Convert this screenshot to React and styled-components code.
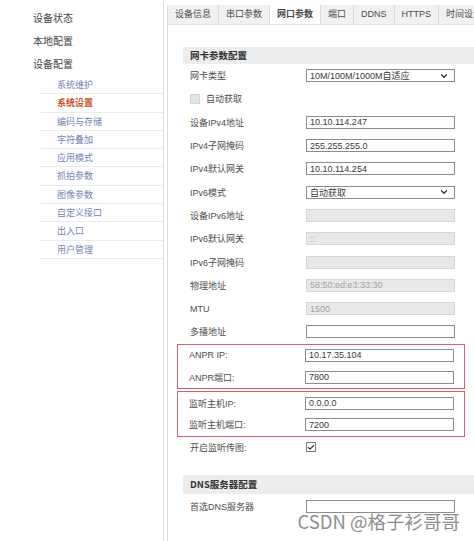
import React from 'react';
import styled, { createGlobalStyle } from 'styled-components';
import { ChevronDown, Check } from 'lucide-react';

const GlobalStyle = createGlobalStyle`
  html, body {
    margin: 0;
    padding: 0;
    background: #fff;
  }
  body {
    font-family: "Liberation Sans", "Noto Sans CJK SC", sans-serif;
    overflow: hidden;
  }
`;

const topItems = ['设备状态', '本地配置', '设备配置'];
const subItems = ['系统维护', '系统设置', '编码与存储', '字符叠加', '应用模式', '抓拍参数', '图像参数', '自定义接口', '出入口', '用户管理'];
const tabs = ['设备信息', '串口参数', '网口参数', '端口', 'DDNS', 'HTTPS', '时间设置'];

const rows = [
  { label: '网卡类型', value: '10M/100M/1000M自适应', kind: 'select' },
  { label: '自动获取', kind: 'check' },
  { label: '设备IPv4地址', value: '10.10.114.247' },
  { label: 'IPv4子网掩码', value: '255.255.255.0' },
  { label: 'IPv4默认网关', value: '10.10.114.254' },
  { label: 'IPv6模式', value: '自动获取', kind: 'select' },
  { label: '设备IPv6地址', value: '', disabled: true },
  { label: 'IPv6默认网关', value: '::', disabled: true },
  { label: 'IPv6子网掩码', value: '', disabled: true },
  { label: '物理地址', value: '58:50:ed:e3:33:30', disabled: true },
  { label: 'MTU', value: '1500', disabled: true },
  { label: '多播地址', value: '' },
];

const groups = [
  [
    { label: 'ANPR IP:', value: '10.17.35.104' },
    { label: 'ANPR端口:', value: '7800' },
  ],
  [
    { label: '监听主机IP:', value: '0.0.0.0' },
    { label: '监听主机端口:', value: '7200' },
  ],
];

const App = () => {
  return (
    <Page>
      <GlobalStyle />
      <Sidebar>
        {topItems.map((t) => (
          <TopItem key={t}>{t}</TopItem>
        ))}
        <SubMenu>
          {subItems.map((s) => (
            <SubItem key={s} $active={s === '系统设置'}>{s}</SubItem>
          ))}
        </SubMenu>
      </Sidebar>

      <Main>
        <Panel>
          <TabBar>
            {tabs.map((t) => (
              <Tab key={t} $active={t === '网口参数'}>{t}</Tab>
            ))}
          </TabBar>

          <Content>
            <SectionHeader>网卡参数配置</SectionHeader>
            {rows.map((r) => (
              <FormRow key={r.label} row={r} />
            ))}
            {groups.map((g, i) => (
              <Highlight key={i} $first={i === 0}>
                {g.map((r) => (
                  <FormRow key={r.label} row={r} h={21.8} />
                ))}
              </Highlight>
            ))}
            <Row $h={21}>
              <Label>开启监听传图:</Label>
              <Box $checked>
                <Check size={9} strokeWidth={3.5} color="#333" />
              </Box>
            </Row>

            <SectionHeader $gap={17} $h={19}>DNS服务器配置</SectionHeader>
            <Row $h={26}>
              <Label>首选DNS服务器</Label>
              <Field />
            </Row>
          </Content>
        </Panel>
      </Main>

      <Watermark>CSDN @格子衫哥哥</Watermark>
    </Page>
  );
};

const FormRow = ({ row, h = 23.3 }) => {
  if (row.kind === 'check') {
    return (
      <Row $h={h}>
        <Box $disabled />
        <CheckText>{row.label}</CheckText>
      </Row>
    );
  }
  return (
    <Row $h={h}>
      <Label>{row.label}</Label>
      <Field $disabled={row.disabled} $select={row.kind === 'select'}>
        <span>{row.value}</span>
        {row.kind === 'select' && <ChevronDown size={10} strokeWidth={3} color="#333" />}
      </Field>
    </Row>
  );
};

const Page = styled.div`
  position: relative;
  display: flex;
  width: 474px;
  height: 541px;
  overflow: hidden;
`;

const Sidebar = styled.div`
  width: 164px;
  flex-shrink: 0;
  padding-top: 6px;
  border-right: 1px solid #dedede;
  box-sizing: border-box;
`;

const TopItem = styled.div`
  height: 23px;
  line-height: 23px;
  padding-left: 33px;
  font-size: 10px;
  color: #444;
  font-family: "Noto Sans CJK SC", sans-serif;
`;

const SubMenu = styled.div`
  margin-left: 40px;
  margin-top: 1px;
`;

const SubItem = styled.div`
  height: 18.3px;
  line-height: 18px;
  padding-left: 17px;
  font-size: 9px;
  box-sizing: border-box;
  border-bottom: 1px solid #ebebeb;
  font-family: "Noto Sans CJK SC", sans-serif;
  color: ${(p) => (p.$active ? '#c9521f' : '#7184b2')};
  font-weight: ${(p) => (p.$active ? 700 : 400)};
`;

const Main = styled.div`
  flex: 1;
  padding: 5px 0 0 3px;
  min-width: 0;
`;

const Panel = styled.div`
  height: 100%;
  border-left: 1px solid #e0e0e0;
`;

const TabBar = styled.div`
  display: flex;
  height: 19px;
  background: #f1f1f1;
  border-bottom: 1px solid #e2e2e2;
  overflow: hidden;
`;

const Tab = styled.div`
  padding: 0 7px;
  line-height: 19px;
  font-size: 9px;
  white-space: nowrap;
  color: #4a4a4a;
  border-right: 1px solid #d9d9d9;
  background: ${(p) => (p.$active ? '#fff' : 'transparent')};
  font-weight: ${(p) => (p.$active ? 700 : 400)};
`;

const Content = styled.div`
  padding: 22px 0 0 15px;
`;

const SectionHeader = styled.div`
  width: 320px;
  height: ${(p) => p.$h || 17}px;
  line-height: ${(p) => p.$h || 17}px;
  margin-top: ${(p) => p.$gap || 0}px;
  padding-left: 7px;
  background: #ececec;
  font-size: 9.5px;
  font-weight: 700;
  color: #333;
  font-family: "Noto Sans CJK SC", sans-serif;
`;

const Row = styled.div`
  display: flex;
  align-items: center;
  height: ${(p) => p.$h}px;
  padding-left: 7px;
`;

const Label = styled.div`
  width: 116px;
  flex-shrink: 0;
  font-size: 9px;
  color: #4d4d4d;
`;

const Field = styled.div`
  display: flex;
  align-items: center;
  justify-content: space-between;
  width: 149px;
  height: 13px;
  box-sizing: border-box;
  padding: 0 ${(p) => (p.$select ? '5px' : '3px')} 0 3px;
  font-size: 9px;
  border: 1px solid ${(p) => (p.$disabled ? '#d6d6d6' : '#8c8c8c')};
  background: ${(p) => (p.$disabled ? '#e8e8e8' : '#fff')};
  color: ${(p) => (p.$disabled ? '#a3a3a3' : '#3a3a3a')};
  white-space: nowrap;
`;

const Highlight = styled.div`
  width: 288px;
  margin: ${(p) => (p.$first ? '0' : '2px')} 0 0 -6px;
  padding-left: 4px;
  border: 1.5px solid #da5e69;
  box-sizing: border-box;
`;

const Box = styled.div`
  display: flex;
  align-items: center;
  justify-content: center;
  width: 10px;
  height: 10px;
  box-sizing: border-box;
  border: 1px solid ${(p) => (p.$checked ? '#7a7a7a' : '#d2d2d2')};
  background: ${(p) => (p.$disabled ? '#e3e3e3' : '#fff')};
`;

const CheckText = styled.span`
  margin-left: 6px;
  font-size: 9px;
  color: #4d4d4d;
`;

const Watermark = styled.div`
  position: absolute;
  right: 14px;
  bottom: 7px;
  font-size: 18.5px;
  color: #8d8d8d;
  font-family: "Noto Sans CJK SC", sans-serif;
  text-shadow: 0 0 2px #fff;
  white-space: nowrap;
`;

export default App;
